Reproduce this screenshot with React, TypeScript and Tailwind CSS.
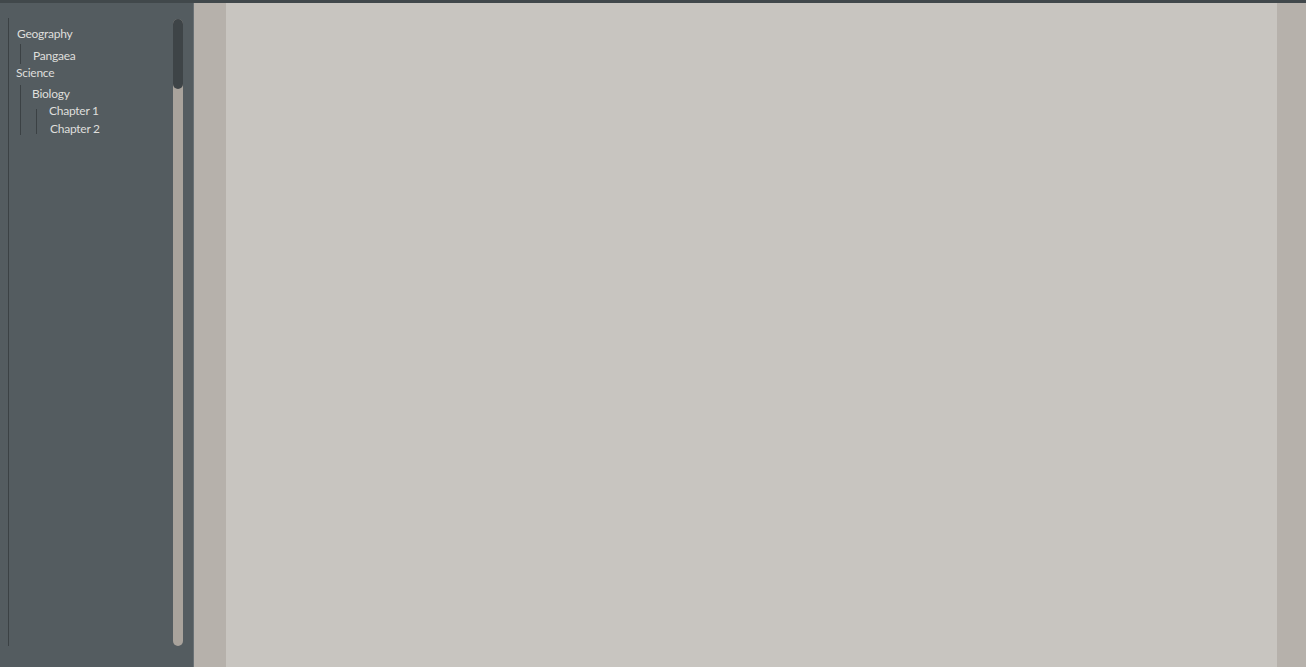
import React from "react";

const font = { fontFamily: "Lato, 'Noto Sans', 'Liberation Sans', sans-serif" };

function Row({ children, indent = "" }: { children: React.ReactNode; indent?: string }) {
  return (
    <div className={`flex h-[17px] items-center text-[12px] leading-[17px] tracking-[-0.25px] text-[#dfdfdc] ${indent}`}>
      {children}
    </div>
  );
}

function Sidebar() {
  return (
    <aside className="flex h-full w-[194px] shrink-0 border-r border-[#6a7175] bg-[#545c60] pt-[15px] pb-[21px]">
      {/* tree */}
      <div className="ml-2 flex-1 border-l border-[#3b4144] pt-[7px] pl-[8px]">
        <Row>Geography</Row>
        <div className="mt-[2px] ml-[3px] flex">
          <div className="w-px bg-[#3b4144]" />
          <div className="pt-[3px] pl-[12px]">
            <Row>Pangaea</Row>
          </div>
        </div>
        <Row indent="-ml-px">Science</Row>
        <div className="mt-[4px] ml-[3px] flex">
          <div className="mb-[2px] w-px bg-[#3b4144]" />
          <div className="pl-[11px]">
            <Row>Biology</Row>
            <div className="flex">
              <div className="mt-[7px] mb-[3px] ml-[4px] w-px bg-[#3b4144]" />
              <div className="pl-[12px]">
                <Row>Chapter 1</Row>
                <Row indent="mt-px pl-px">Chapter 2</Row>
              </div>
            </div>
          </div>
        </div>
      </div>
      {/* scrollbar */}
      <div className="mt-px mr-[10px] flex w-[10px] flex-col rounded-full bg-[#a9a39c]">
        <div className="h-[70px] rounded-full bg-[#3e4447]" />
      </div>
    </aside>
  );
}

export default function App() {
  return (
    <div className="flex h-[667px] w-full flex-col overflow-hidden bg-[#c8c5c0]" style={font}>
      <div className="h-[3px] shrink-0 bg-[#41484b]" />
      <div className="flex min-h-0 flex-1">
        <Sidebar />
        <div className="w-[32px] shrink-0 bg-[#b6b1ab]" />
        <main className="flex-1 bg-[#c8c5c0]" />
        <div className="w-[29px] shrink-0 bg-[#b6b1ab]" />
      </div>
    </div>
  );
}
